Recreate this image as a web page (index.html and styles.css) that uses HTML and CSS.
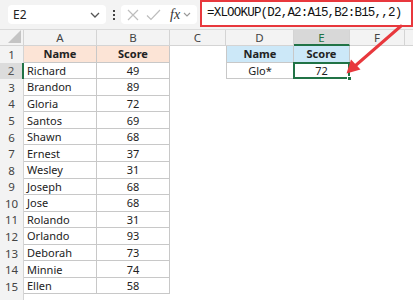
FILE: index.html
```html
<!DOCTYPE html>
<html>
<head>
<meta charset="utf-8">
<link rel="stylesheet" href="styles.css">
</head>
<body>
<div class="app">
  <div class="toolbar">
    <div class="namebox"><span class="ref">E2</span>
      <svg class="chev" width="10" height="6" viewBox="0 0 10 6"><path d="M1 1 L5 5 L9 1" fill="none" stroke="#555" stroke-width="1.3"/></svg>
    </div>
    <div class="dots"><i></i><i></i><i></i></div>
    <div class="fbtns">
      <svg width="12" height="12" viewBox="0 0 12 12"><path d="M1 1 L11 11 M11 1 L1 11" stroke="#bdbdbd" stroke-width="1.2" fill="none"/></svg>
      <svg width="15" height="12" viewBox="0 0 15 12"><path d="M1 6.5 L5 10.5 L14 1" stroke="#bdbdbd" stroke-width="1.2" fill="none"/></svg>
      <span class="fx">fx</span>
      <svg class="chev2" width="8" height="5" viewBox="0 0 8 5"><path d="M1 1 L4 4 L7 1" fill="none" stroke="#999" stroke-width="1.1"/></svg>
    </div>
    <div class="formula">=XLOOKUP(D2,A2:A15,B2:B15,,2)</div>
  </div>
  <div class="grid">
    <div class="hd corner"><svg width="13" height="13" viewBox="0 0 13 13"><path d="M13 0 L13 13 L0 13 Z" fill="#c4c4c4"/></svg></div>
    <div class="hd col">A</div><div class="hd col">B</div><div class="hd col">C</div><div class="hd col">D</div><div class="hd col sel">E</div><div class="hd col">F</div><div class="hd col"></div>

    <div class="rh">1</div><div class="c t th">Name</div><div class="c t th">Score</div><div class="c"></div><div class="c t t2 th2 tl">Name</div><div class="c t t2 th2">Score</div><div class="c"></div><div class="c"></div>
    <div class="rh rsel">2</div><div class="c t">Richard</div><div class="c t n">49</div><div class="c"></div><div class="c t t2 tl n">Glo*</div><div class="c t t2 n active">72<span class="selbox"><span class="handle"></span></span></div><div class="c"></div><div class="c"></div>
    <div class="rh">3</div><div class="c t">Brandon</div><div class="c t n">89</div><div class="c"></div><div class="c"></div><div class="c"></div><div class="c"></div><div class="c"></div>
    <div class="rh">4</div><div class="c t">Gloria</div><div class="c t n">72</div><div class="c"></div><div class="c"></div><div class="c"></div><div class="c"></div><div class="c"></div>
    <div class="rh">5</div><div class="c t">Santos</div><div class="c t n">69</div><div class="c"></div><div class="c"></div><div class="c"></div><div class="c"></div><div class="c"></div>
    <div class="rh">6</div><div class="c t">Shawn</div><div class="c t n">68</div><div class="c"></div><div class="c"></div><div class="c"></div><div class="c"></div><div class="c"></div>
    <div class="rh">7</div><div class="c t">Ernest</div><div class="c t n">37</div><div class="c"></div><div class="c"></div><div class="c"></div><div class="c"></div><div class="c"></div>
    <div class="rh">8</div><div class="c t">Wesley</div><div class="c t n">31</div><div class="c"></div><div class="c"></div><div class="c"></div><div class="c"></div><div class="c"></div>
    <div class="rh">9</div><div class="c t">Joseph</div><div class="c t n">68</div><div class="c"></div><div class="c"></div><div class="c"></div><div class="c"></div><div class="c"></div>
    <div class="rh">10</div><div class="c t">Jose</div><div class="c t n">68</div><div class="c"></div><div class="c"></div><div class="c"></div><div class="c"></div><div class="c"></div>
    <div class="rh">11</div><div class="c t">Rolando</div><div class="c t n">31</div><div class="c"></div><div class="c"></div><div class="c"></div><div class="c"></div><div class="c"></div>
    <div class="rh">12</div><div class="c t">Orlando</div><div class="c t n">93</div><div class="c"></div><div class="c"></div><div class="c"></div><div class="c"></div><div class="c"></div>
    <div class="rh">13</div><div class="c t">Deborah</div><div class="c t n">73</div><div class="c"></div><div class="c"></div><div class="c"></div><div class="c"></div><div class="c"></div>
    <div class="rh">14</div><div class="c t">Minnie</div><div class="c t n">74</div><div class="c"></div><div class="c"></div><div class="c"></div><div class="c"></div><div class="c"></div>
    <div class="rh">15</div><div class="c t">Ellen</div><div class="c t n">58</div><div class="c"></div><div class="c"></div><div class="c"></div><div class="c"></div><div class="c"></div>
    <div class="rh"></div><div class="c"></div><div class="c"></div><div class="c"></div><div class="c"></div><div class="c"></div><div class="c"></div><div class="c"></div>
  </div>
  <svg class="arrow" width="413" height="300" viewBox="0 0 413 300">
    <line x1="401" y1="26" x2="355" y2="66" stroke="#e8383d" stroke-width="3" stroke-linecap="round"/>
    <path d="M346.5 73.5 L351 59.5 L360.5 69.5 Z" fill="#e8383d"/>
  </svg>
</div>
</body>
</html>
```
FILE: styles.css
```css
* { box-sizing: border-box; }
html, body { margin: 0; padding: 0; }
body { width: 413px; height: 300px; overflow: hidden; background: #fff; font-family: "Noto Sans", "Liberation Sans", sans-serif; }
.app { position: relative; width: 413px; height: 300px; overflow: hidden; }
.toolbar {
  height: 30px; background: #f3f3f3; border-bottom: 1px solid #dadada;
  display: flex; align-items: center; padding-left: 8px;
}
.namebox {
  width: 98px; height: 19px; background: #fff; border-radius: 4px;
  display: flex; align-items: center; justify-content: space-between;
  padding: 0 6px 0 5px; font-size: 12px; color: #222;
}
.dots { width: 15px; display: flex; flex-direction: column; align-items: center; gap: 2px; }
.dots i { width: 2px; height: 2px; background: #444; display: block; }
.fbtns {
  width: 76px; height: 19px; background: #fff; border-radius: 4px;
  display: flex; align-items: center; padding: 0 5px 0 6px; gap: 0;
}
.fbtns svg:first-child { margin-right: 7px; }
.fx { font-family: "Liberation Serif", serif; font-style: italic; font-size: 14px; color: #333; margin-left: 9px; margin-right: 3px; line-height: 1; }
.formula {
  margin-left: 3px; width: 213px; height: 27px; margin-top: -3px;
  border: 2px solid #e8383d; background: #fff;
  font-family: "Liberation Mono", monospace; font-size: 12.5px; letter-spacing: -0.8px;
  color: #111; display: flex; align-items: center; padding-left: 5px;
}
.grid {
  display: grid;
  grid-template-columns: 24px 73px 73px 56px 68px 56px 55px 40px;
  grid-template-rows: 16px repeat(16, 16.57px);
  font-size: 11px; color: #222;
}
.hd { background: #f3f3f3; border-bottom: 1px solid #d4d4d4; display: flex; align-items: center; justify-content: center; color: #444; font-size: 11.5px; }
.col { border-right: 1px solid #d4d4d4; }
.corner { border-right: 1px solid #d4d4d4; justify-content: flex-end; align-items: flex-end; padding: 0 2px 2px 0; }
.hd.sel { background: #d8d8d8; color: #217346; border-bottom: 2px solid #217346; }
.rh { background: #f3f3f3; border-right: 1px solid #d4d4d4; display: flex; align-items: center; justify-content: center; color: #444; font-size: 11.5px; }
.rh.rsel { background: #dcdcdc; border-right: 2px solid #217346; color: #555; }
.c { display: flex; align-items: center; padding-left: 3px; white-space: nowrap; }
.t { border-right: 1px solid #c8c8c8; border-bottom: 1px solid #c8c8c8; }
.tl { border-left: 1px solid #c8c8c8; }
.n { justify-content: center; padding-left: 0; }
.th { background: #fce4d6; font-weight: bold; justify-content: center; padding-left: 0; }
.th2 { background: #cce8f8; font-weight: bold; justify-content: center; padding-left: 0; }
.active { position: relative; }
.selbox { position: absolute; left: -1px; top: -1px; right: -1px; bottom: -1px; border: 2px solid #217346; }
.handle { position: absolute; right: -4px; bottom: -4px; width: 5px; height: 5px; background: #217346; border: 1px solid #fff; }
.arrow { position: absolute; left: 0; top: 0; pointer-events: none; }
```
